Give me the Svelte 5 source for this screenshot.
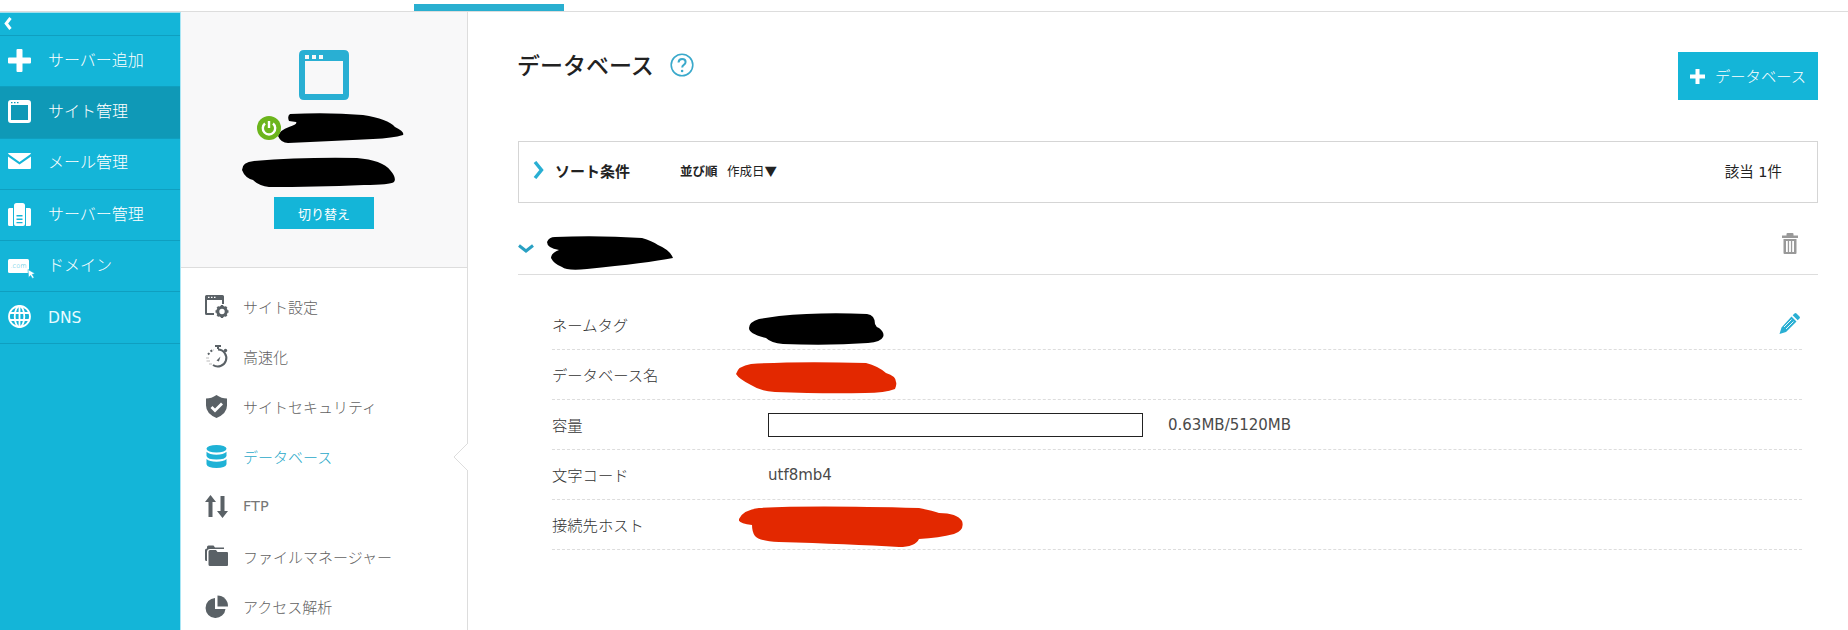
<script lang="ts">
	const SIDE_ITEMS = [
		{
			label: 'サーバー追加',
			icon: '<path d="M8.500 1q0-1 1-1h4q1 0 1 1v7.500H22q1 0 1 1v4q0 1-1 1h-7.500V22q0 1-1 1h-4q-1 0-1-1v-7.500H1q-1 0-1-1v-4q0-1 1-1h7.500z" fill="#fff"/>'
		},
		{
			label: 'サイト管理',
			active: true,
			icon: '<path fill-rule="evenodd" d="M3 0h17a3 3 0 0 1 3 3v17a3 3 0 0 1-3 3H3a3 3 0 0 1-3-3V3a3 3 0 0 1 3-3zM3 5v15h17V5z" fill="#fff"/><path d="M3 2h1.500v1.300H3zM6 2h1.500v1.300H6zM9 2h1.500v1.300H9z" fill="#0f99b7"/>'
		},
		{
			label: 'メール管理',
			icon: '<path d="M1 2h21q1 0 1 .8L11.500 11 0 2.800Q0 2 1 2zM0 5.500l11.500 8 11.500-8V17q0 1-1 1H1q-1 0-1-1z" fill="#fff"/>'
		},
		{
			label: 'サーバー管理',
			icon: '<path fill-rule="evenodd" d="M8.500 0h6Q17 0 17 2.500V21q0 2-2 2H8q-2 0-2-2V2.500Q6 0 8.500 0zM8.500 12v1.500h6V12zM8.500 15.500V17h6v-1.500zM8.500 19v1.300h6V19z" fill="#fff"/><path d="M0 6.500Q0 5 1.500 5H5v18H1.500Q0 23 0 21.500zM18 5h3.500Q23 5 23 6.500v15q0 1.500-1.500 1.500H18z" fill="#fff"/>'
		},
		{
			label: 'ドメイン',
			icon: '<rect x="0" y="5" width="21" height="14" rx="1.500" fill="#fff"/><text x="10.500" y="13.500" font-size="6.500" text-anchor="middle" fill="#14b5d8" font-family="DejaVu Sans, sans-serif">.com</text><path d="M20 15.500l7 4-2.800 1 2 3-1.700.9-2-3-1.900 2z" fill="#fff" stroke="#14b5d8" stroke-width=".6"/>'
		},
		{
			label: 'DNS',
			latin: true,
			icon: '<g fill="none" stroke="#fff" stroke-width="1.800"><circle cx="11.500" cy="11.500" r="10.500"/><ellipse cx="11.500" cy="11.500" rx="4.800" ry="10.500"/><path d="M11.500 1v21M1.500 8h20M1.500 15h20"/></g>'
		}
	];

	const NAV_ITEMS = [
		{
			label: 'サイト設定',
			icon: '<path fill-rule="evenodd" d="M1.500 0h16Q19 0 19 1.500V9h-2V5H2v13h7v2H1.500Q0 20 0 18.500v-17Q0 0 1.500 0z" fill="#5a6166"/><path d="M3 1.800h1.500v1.300H3zM6 1.800h1.500v1.300H6zM9 1.800h1.500v1.300H9z" fill="#fff"/><circle cx="17" cy="16.500" r="4.200" fill="none" stroke="#5a6166" stroke-width="3"/><path d="M17 10v3M17 20v3M10.500 16.500h3M20.500 16.500h3M12.400 11.900l2.100 2.100M19.500 19l2.100 2.100M12.400 21.100l2.100-2.100M19.500 14l2.100-2.100" stroke="#5a6166" stroke-width="2.400"/>'
		},
		{
			label: '高速化',
			icon: '<g fill="none" stroke="#5a6166" stroke-width="2"><path d="M13 4.500a8.500 8.500 0 1 1-5 15.500"/><path d="M3 9.500l1.500-1.500M5.500 6.500q1.500-1.300 3-1.600" stroke-dasharray="2 1.200"/><path d="M1 13h3M1.500 16h3.500M4 19h3" stroke="#bbb" stroke-width="1"/></g><path d="M10 0h6v2h-6z" fill="#5a6166"/><path d="M13 1v3" stroke="#5a6166" stroke-width="2"/><circle cx="20.500" cy="5.500" r="1.700" fill="#5a6166"/><path d="M11.500 15.500l4-4-1.600 5z" fill="#5a6166"/>'
		},
		{
			label: 'サイトセキュリティ',
			icon: '<path fill-rule="evenodd" d="M11.500 0q5 3.500 10.500 3.500v7Q22 18.500 11.500 23 1 18.500 1 10.500v-7Q6.500 3.500 11.500 0zM7.500 11l-2 2 4.500 4.500 8-8-2-2-6 6z" fill="#5a6166"/>'
		},
		{
			label: 'データベース',
			current: true,
			icon: '<g fill="#1fb2d6"><ellipse cx="11.500" cy="3.800" rx="10" ry="3.800"/><path d="M1.500 6.800q3 3 10 3t10-3v4.200q-1 3.500-10 3.500T1.500 11z"/><path d="M1.500 14q3 2.800 10 2.800t10-2.800v5.200q-1 3.800-10 3.800t-10-3.800z"/></g>'
		},
		{
			label: 'FTP',
			latin: true,
			icon: '<path d="M5.500 0l5.500 7H7.500v15h-4V7H0zM17.500 23L23 16h-3.500V1h-4v15H12z" fill="#5a6166"/>'
		},
		{
			label: 'ファイルマネージャー',
			icon: '<path d="M2 3.500V2q0-1.500 1.500-1.500h5L10 2.500h9V4H5Q2 4 2 7v9H1.500Q0 16 0 14.500V5q0-1.500 2-1.500z" fill="#5a6166"/><path d="M5 5h6l1.500 2H22q1 0 1 1v12q0 1-1 1H5q-1.500 0-1.500-1.500v-13Q3.500 5 5 5z" fill="#5a6166"/>'
		},
		{
			label: 'アクセス解析',
			icon: '<path d="M10 3a10 10 0 1 0 10.500 11H10z" fill="#5a6166"/><path d="M12.500 0.500A10.500 10.500 0 0 1 23 11.500H12.500z" fill="#5a6166"/>'
		}
	];

	const ROWS = [
		{ label: 'ネームタグ', scribble: 'tag' },
		{ label: 'データベース名', scribble: 'name' },
		{ label: '容量', usage: '0.63MB/5120MB' },
		{ label: '文字コード', value: 'utf8mb4' },
		{ label: '接続先ホスト', scribble: 'host' }
	];
</script>

<div class="page">
	<div class="topbar"><span class="tab"></span></div>

	<div class="body">
		<aside class="sidebar">
			<div class="collapse">
				<svg width="8" height="13" viewBox="0 0 8 13"><path d="M6.500 1L2.200 6.500 6.500 12" fill="none" stroke="#fff" stroke-width="3" /></svg>
			</div>
			{#each SIDE_ITEMS as item}
				<div class="side-item" class:active={item.active}>
					<svg class="side-icon" width="28" height="25" viewBox="0 0 28 25">{@html item.icon}</svg>
					<span class:latin={item.latin}>{item.label}</span>
				</div>
			{/each}
		</aside>

		<section class="panel">
			<div class="site">
				<svg class="site-icon" width="50" height="50" viewBox="0 0 50 50">
					<path fill-rule="evenodd" d="M5 0h40q5 0 5 5v40q0 5-5 5H5q-5 0-5-5V5q0-5 5-5zM6 11v33h38V11z" fill="#29afd3" />
					<path d="M6 5h4v4H6zM13 5h4v4h-4zM20 5h4v4h-4z" fill="#f8f8f8" />
				</svg>
				<div class="site-name">
					<svg class="power" width="24" height="24" viewBox="0 0 24 24">
						<circle cx="12" cy="12" r="12" fill="#6cb51c" />
						<path d="M8 7.500a6.200 6.200 0 1 0 8 0" fill="none" stroke="#fff" stroke-width="2.400" />
						<path d="M12 5v7" stroke="#fff" stroke-width="2.400" />
					</svg>
					<svg class="name-scribble" width="126" height="31" viewBox="0 0 126 31">
						<path d="M12 1Q50-1 85 2q25 4 32 12 10 5 8 8-10 3-30 4-40 2-85 4Q3 30 0 23 2 17 11 14q9-3 7-5L11 8q-2-5 1-7z" fill="#000" />
					</svg>
				</div>
				<svg class="url-scribble" width="154" height="30" viewBox="0 0 154 30">
					<path d="M12 4Q60 0 115 1q25 2 33 12 7 8 4 12-4 3-30 3-50 2-95 2-10-1-16-7Q3 21 0 13 0 5 12 4z" fill="#000" />
				</svg>
				<div class="switch">切り替え</div>
			</div>

			<nav class="nav">
				{#each NAV_ITEMS as item}
					<div class="nav-item" class:current={item.current}>
						<svg width="24" height="24" viewBox="0 0 24 24">{@html item.icon}</svg>
						<span class="nav-label" class:latin={item.latin}>{item.label}</span>
						{#if item.current}
							<svg class="notch" width="15" height="28" viewBox="0 0 15 28">
								<path d="M15 0L0 14l15 14z" fill="#fff" />
								<path d="M15 0L1 14l14 14" fill="none" stroke="#ddd" />
							</svg>
						{/if}
					</div>
				{/each}
			</nav>
		</section>

		<main class="main">
			<header class="head">
				<h1>データベース</h1>
				<svg class="help" width="24" height="24" viewBox="0 0 24 24">
					<circle cx="12" cy="12" r="10.800" fill="none" stroke="#3aa9cb" stroke-width="1.600" />
					<path d="M8.500 9.500q.3-3.500 3.600-3.500 3.500 0 3.500 3 0 1.700-1.800 2.800-1.600 1-1.600 2.700" fill="none" stroke="#3aa9cb" stroke-width="2" />
					<circle cx="12.100" cy="18" r="1.300" fill="#3aa9cb" />
				</svg>
				<div class="add">
					<svg width="15" height="15" viewBox="0 0 15 15"><path d="M5.500 0h4v5.500H15v4H9.500V15h-4V9.500H0v-4h5.500z" fill="#fff" /></svg>
					<span>データベース</span>
				</div>
			</header>

			<div class="sort">
				<svg width="11" height="18" viewBox="0 0 11 18"><path d="M2 1l6.500 8L2 17" fill="none" stroke="#29afd3" stroke-width="3.400" /></svg>
				<strong class="sort-title">ソート条件</strong>
				<strong class="sort-label">並び順</strong>
				<span class="sort-value">作成日▼</span>
				<span class="count">該当 1件</span>
			</div>

			<div class="db-head">
				<svg width="16" height="10" viewBox="0 0 16 10"><path d="M1 1.500l7 5.500 7-5.500" fill="none" stroke="#29a0c3" stroke-width="3" /></svg>
				<svg class="db-scribble" width="126" height="34" viewBox="0 0 126 34">
					<path d="M8 1Q50-1 95 2q10 3 16 7 12 5 15 13Q100 27 40 33q-20 2-25-2-8-3-11-9 0-5 8-8Q0 12 0 6q2-5 8-5z" fill="#000" />
				</svg>
				<svg class="trash" width="16" height="21" viewBox="0 0 16 21">
					<path fill-rule="evenodd" d="M5.500 0h5q1 0 1 1v1.500H16V5H0V2.500h4.500V1q0-1 1-1zM1.500 6h13v14q0 1-1 1h-11q-1 0-1-1zM4 8v11h1.800V8zM7.100 8v11h1.800V8zM10.200 8v11H12V8z" fill="#999" />
				</svg>
			</div>

			<div class="rows">
				{#each ROWS as row, i}
					<div class="row">
						<span class="row-label">{row.label}</span>
						<div class="row-value">
							{#if row.scribble === 'tag'}
								<svg class="scr-tag" width="135" height="32" viewBox="0 0 135 32">
									<path d="M30 3Q70-1 118 1q8 1 8 10 1 3 4 4 6 5 4 9-2 5-15 6-40 3-85 1-12-1-17-6Q0 21 0 15 0 9 10 6z" fill="#000" />
								</svg>
							{:else if row.scribble === 'name'}
								<svg class="scr-name" width="161" height="32" viewBox="0 0 161 32">
									<path d="M15 2Q60-1 130 1q12 3 20 10 10 3 10 9 1 2-1 7-10 4-30 4-40 1-90-1-15-1-24-7Q3 17 0 12 2 4 15 2z" fill="#e32800" />
								</svg>
							{:else if row.scribble === 'host'}
								<svg class="scr-host" width="224" height="42" viewBox="0 0 224 42">
									<path d="M20 2Q70-1 180 2q15 3 20 5 18 0 23 8 3 9-8 13-15 4-35 5-4 8-20 8-50-3-120-5-20-1-24-6-3-4-3-11Q-2 17 0 13 4 4 20 2z" fill="#e32800" />
								</svg>
							{:else if row.usage}
								<span class="meter"></span>
								<span class="usage latin">{row.usage}</span>
							{:else}
								<span class="latin">{row.value}</span>
							{/if}
						</div>
						{#if i === 0}
							<svg class="pencil" width="22" height="22" viewBox="0 0 22 22">
								<path d="M15.500 1.500q1-1 2 0l3 3q1 1 0 2l-1.800 1.800-5-5zM12.500 4.500l5 5L7 20l-6.500 2 2-6.500z" fill="#29afd3" />
								<path d="M12.500 7.500L5 15M14.500 9.500L7 17" stroke="#fff" stroke-width=".9" />
							</svg>
						{/if}
					</div>
				{/each}
			</div>
		</main>
	</div>
</div>

<style>
	:global(body) {
		margin: 0;
		background: #fff;
	}

	.page {
		width: 1848px;
		height: 630px;
		overflow: hidden;
		font-family: 'Noto Sans CJK JP', 'Liberation Sans', sans-serif;
		font-weight: 300;
		color: #333;
		display: flex;
		flex-direction: column;
	}

	.latin {
		font-family: 'DejaVu Sans', sans-serif;
		font-weight: 400;
		color: #4a4a4a;
	}

	.topbar {
		height: 11px;
		border-bottom: 1px solid #ddd;
		flex: none;
		padding-left: 414px;
		padding-top: 5px;
		box-sizing: content-box;
		margin-top: -5px;
	}

	.tab {
		display: block;
		width: 150px;
		height: 7px;
		margin-top: 4px;
		background: #29afd0;
	}

	.body {
		display: flex;
		flex: 1;
		min-height: 0;
	}

	.sidebar {
		width: 180px;
		flex: none;
		background: #14b5d8;
		color: #fff;
		box-shadow: inset 0 1px 0 #9fe0ee;
	}

	.collapse {
		height: 24px;
		padding-left: 4px;
		display: flex;
		align-items: center;
		border-bottom: 1px solid #0f9fc0;
		box-sizing: border-box;
	}

	.side-item {
		height: 51.300px;
		box-sizing: border-box;
		display: flex;
		align-items: center;
		gap: 12px;
		padding: 0 0 5px 8px;
		font-size: 16px;
		border-bottom: 1px solid #0f9fc0;
	}

	.side-item .latin {
		font-size: 15.500px;
		color: #e8fbff;
		margin-top: 6px;
	}

	.side-item.active {
		background: #0f99b7;
	}

	.side-icon {
		flex: none;
		margin-top: 5px;
	}

	.panel {
		width: 288px;
		flex: none;
		border-right: 1px solid #ddd;
		border-left: 1px solid #a9e6f5;
		box-sizing: border-box;
	}

	.site {
		height: 256px;
		box-sizing: border-box;
		background: #f8f8f9;
		border-bottom: 1px solid #ddd;
		padding-top: 38px;
		display: flex;
		flex-direction: column;
		align-items: center;
	}

	.site-icon {
		flex: none;
		display: block;
	}

	.site-name {
		align-self: flex-start;
		margin: 13px 0 0 76px;
		display: flex;
		align-items: flex-start;
		height: 31px;
	}

	.power {
		margin-top: 3px;
		position: relative;
		z-index: 1;
		flex: none;
	}

	.name-scribble {
		margin-left: -3px;
		flex: none;
	}

	.url-scribble {
		align-self: flex-start;
		margin: 13px 0 0 61px;
		flex: none;
	}

	.switch {
		width: 100px;
		height: 32px;
		margin-top: 10px;
		flex: none;
		background: #14b5d8;
		color: #fff;
		font-size: 13px;
		font-weight: 400;
		display: flex;
		align-items: center;
		justify-content: center;
	}

	.nav {
		padding-top: 14px;
	}

	.nav-item {
		height: 50px;
		display: flex;
		align-items: center;
		gap: 14px;
		padding-left: 24px;
		font-size: 15px;
		color: #626262;
		position: relative;
	}

	.nav-label {
		padding-bottom: 2px;
	}

	.nav-item.current {
		color: #2ba9c9;
	}

	.nav-item .latin {
		font-size: 14.500px;
		color: #777;
	}

	.notch {
		position: absolute;
		right: -1px;
		top: 11px;
	}

	.main {
		flex: 1;
		min-width: 0;
		padding: 0 30px 0 50px;
	}

	.head {
		display: flex;
		align-items: flex-start;
		height: 129px;
	}

	h1 {
		margin: 34px 0 0 -1px;
		font-size: 23px;
		line-height: 36px;
		font-weight: 500;
		color: #222;
	}

	.help {
		margin: 41px 0 0 16px;
	}

	.add {
		margin: 40px 0 0 auto;
		width: 140px;
		height: 48px;
		box-sizing: border-box;
		background: #14b5d8;
		color: #fff;
		font-size: 15.300px;
		display: flex;
		align-items: center;
		gap: 10px;
		padding-left: 12px;
	}

	.add span {
		padding-bottom: 2px;
	}

	.sort {
		height: 62px;
		box-sizing: border-box;
		border: 1px solid #d5d5d5;
		display: flex;
		align-items: center;
		padding: 0 0 4px 14px;
		color: #222;
	}

	.sort-title {
		font-size: 15px;
		font-weight: 700;
		margin-left: 11px;
		width: 125px;
	}

	.sort-label {
		font-size: 12.500px;
		font-weight: 700;
		width: 47px;
	}

	.sort-value {
		font-size: 12.500px;
		font-weight: 400;
	}

	.count {
		margin-left: auto;
		margin-right: 35px;
		font-family: 'DejaVu Sans', 'Noto Sans CJK JP', sans-serif;
		font-size: 14.500px;
		font-weight: 400;
	}

	.db-head {
		height: 72px;
		box-sizing: border-box;
		border-bottom: 1px solid #ddd;
		display: flex;
		align-items: flex-start;
	}

	.db-head > svg:first-child {
		margin-top: 41px;
	}

	.db-scribble {
		margin: 33px 0 0 13px;
	}

	.trash {
		margin: 30px 20px 0 auto;
	}

	.rows {
		padding: 25px 16px 0 34px;
	}

	.row {
		height: 50px;
		box-sizing: border-box;
		border-bottom: 1px dashed #ddd;
		display: grid;
		grid-template-columns: 216px 1fr auto;
		grid-template-rows: 49px;
		align-items: center;
		font-size: 15.300px;
		color: #333;
	}

	.row-label {
		padding-bottom: 2px;
	}

	.row-value {
		display: flex;
		align-items: center;
		height: 49px;
		font-size: 15px;
	}

	.scr-tag {
		margin: 8px 0 0 -19px;
	}

	.scr-name {
		margin: 6px 0 0 -32px;
	}

	.scr-host {
		margin: 4px 0 0 -29px;
	}

	.meter {
		width: 375px;
		height: 24px;
		box-sizing: border-box;
		border: 1px solid #222;
		background: #fff;
	}

	.usage {
		margin-left: 25px;
	}

	.pencil {
		margin: 0 1px 4px 0;
	}
</style>
